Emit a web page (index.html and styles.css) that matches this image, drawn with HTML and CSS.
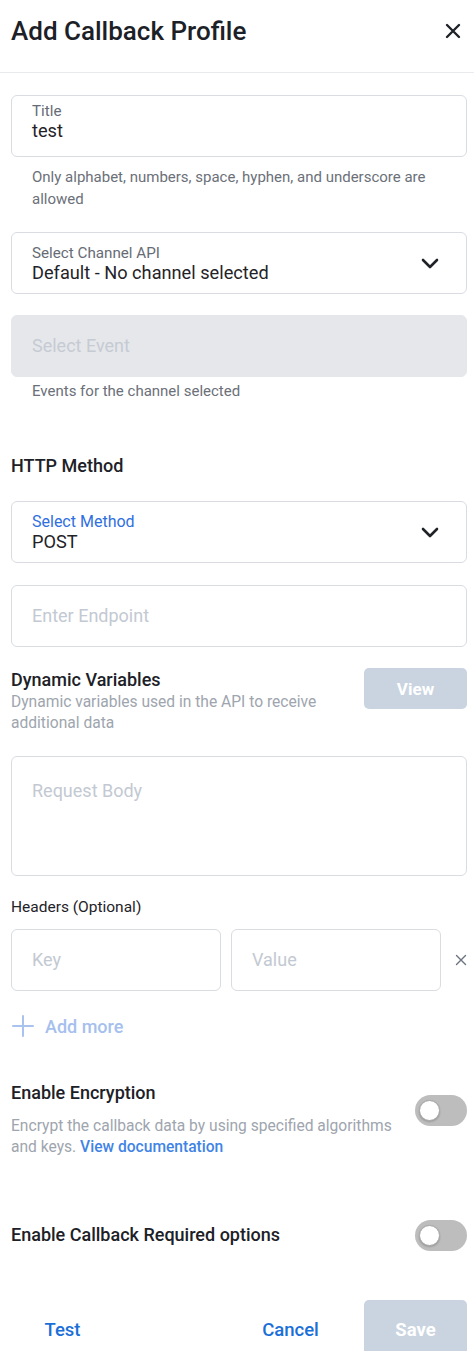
FILE: index.html
```html
<!DOCTYPE html>
<html lang="en">
<head>
<meta charset="utf-8">
<title>Add Callback Profile</title>
<link rel="stylesheet" href="styles.css">
</head>
<body>
<div class="panel">
  <header class="header">
    <h1 class="title">Add Callback Profile</h1>
    <button class="close" aria-label="Close">
      <svg width="16" height="16" viewBox="0 0 16 16"><path d="M2 2L14 14M14 2L2 14" stroke="#1f2328" stroke-width="2.4" stroke-linecap="round"/></svg>
    </button>
  </header>

  <div class="form">
    <div class="field field-title">
      <span class="field-label">Title</span>
      <span class="field-value">test</span>
    </div>
    <p class="help help-title">Only alphabet, numbers, space, hyphen, and underscore are allowed</p>

    <div class="field field-select field-channel">
      <div class="field-text">
        <span class="field-label">Select Channel API</span>
        <span class="field-value">Default - No channel selected</span>
      </div>
      <svg class="chevron" width="18" height="11" viewBox="0 0 18 11"><path d="M2 2L9 9L16 2" fill="none" stroke="#1f2328" stroke-width="2.6" stroke-linecap="round" stroke-linejoin="round"/></svg>
    </div>

    <div class="field field-disabled">
      <span class="placeholder">Select Event</span>
    </div>
    <p class="help help-event">Events for the channel selected</p>

    <h2 class="section-title http-title">HTTP Method</h2>

    <div class="field field-select field-method">
      <div class="field-text">
        <span class="field-label label-active">Select Method</span>
        <span class="field-value">POST</span>
      </div>
      <svg class="chevron" width="18" height="11" viewBox="0 0 18 11"><path d="M2 2L9 9L16 2" fill="none" stroke="#1f2328" stroke-width="2.6" stroke-linecap="round" stroke-linejoin="round"/></svg>
    </div>

    <div class="field field-endpoint">
      <span class="placeholder">Enter Endpoint</span>
    </div>

    <div class="dyn-row">
      <div class="dyn-text">
        <h2 class="section-title">Dynamic Variables</h2>
        <p class="desc">Dynamic variables used in the API to receive additional data</p>
      </div>
      <button class="btn-disabled btn-view">View</button>
    </div>

    <div class="field textarea">
      <span class="placeholder">Request Body</span>
    </div>

    <p class="headers-label">Headers (Optional)</p>
    <div class="header-row">
      <div class="field"><span class="placeholder">Key</span></div>
      <div class="field"><span class="placeholder">Value</span></div>
      <span class="remove">
        <svg width="12" height="12" viewBox="0 0 12 12"><path d="M1.5 1.5L10.5 10.5M10.5 1.5L1.5 10.5" stroke="#6b7280" stroke-width="1.4" stroke-linecap="round"/></svg>
      </span>
    </div>

    <div class="add-more">
      <svg width="22" height="22" viewBox="0 0 22 22"><path d="M11 1V21M1 11H21" stroke="#a9c3ef" stroke-width="2" stroke-linecap="round"/></svg>
      <span>Add more</span>
    </div>

    <div class="toggle-row enc-row">
      <div class="toggle-text">
        <h2 class="section-title">Enable Encryption</h2>
        <p class="desc enc-desc">Encrypt the callback data by using specified algorithms and keys. <a class="doc-link">View documentation</a></p>
      </div>
      <span class="switch"><span class="knob"></span></span>
    </div>

    <div class="toggle-row req-row">
      <h2 class="section-title">Enable Callback Required options</h2>
      <span class="switch"><span class="knob"></span></span>
    </div>

    <div class="footer">
      <button class="btn-link">Test</button>
      <div class="footer-right">
        <button class="btn-link">Cancel</button>
        <button class="btn-disabled btn-save">Save</button>
      </div>
    </div>
  </div>
</div>
</body>
</html>
```

FILE: styles.css
```css
* { box-sizing: border-box; }
html, body { margin: 0; padding: 0; background: #ffffff; }
body {
  font-family: Roboto, "Liberation Sans", sans-serif;
  color: #1f2328;
  overflow: hidden;
}
button { font-family: inherit; border: 0; background: none; cursor: pointer; padding: 0; }
h1, h2, p { margin: 0; }

.panel { width: 474px; }

.header {
  height: 73px;
  border-bottom: 1px solid #e8eaed;
  display: flex;
  align-items: center;
  justify-content: space-between;
  padding: 0 13px 10px 11px;
}
.title {
  font-size: 26px;
  font-weight: 500;
  color: #1c2127;
}
.close { display: flex; width: 16px; height: 16px; }

.form { padding: 0 7px 0 11px; }

.field {
  height: 62px;
  border: 1px solid #d9dce1;
  border-radius: 6px;
  background: #fff;
  padding: 0 20px;
  display: flex;
  flex-direction: column;
  justify-content: center;
}
.field-title { margin-top: 22px; padding-top: 6px; justify-content: flex-start; }
.field-label { font-size: 15.2px; line-height: 18px; color: #666c75; }
.label-active { color: #2f6fe0; font-size: 16px; }
.field-value { font-size: 18.2px; line-height: 22px; color: #1f2328; }

.field-select {
  flex-direction: row;
  align-items: center;
  justify-content: space-between;
  padding-right: 27px;
}
.field-text { display: flex; flex-direction: column; padding-top: 1px; }
.chevron { display: block; }

.help { font-size: 15px; color: #6b7079; padding-left: 21px; }
.help-title { line-height: 22px; margin-top: 9px; }
.field-channel { margin-top: 22px; }

.field-disabled {
  margin-top: 21px;
  background: #e5e7eb;
  border-color: #e5e7eb;
}
.placeholder { font-size: 18px; line-height: 22px; color: #c3c9d2; }
.field-disabled .placeholder { color: #c6cbd3; }

.help-event { line-height: 20px; margin-top: 4px; }

.section-title { font-size: 18px; font-weight: 500; line-height: 24px; color: #1c2127; }
.http-title { margin-top: 53px; }

.field-method { margin-top: 23px; }
.field-endpoint { margin-top: 22px; }

.dyn-row {
  margin-top: 20px;
  display: flex;
  justify-content: space-between;
  align-items: flex-start;
  gap: 12px;
}
.dyn-text { flex: 1; }
.dyn-text .section-title { line-height: 25px; }
.desc { font-size: 15.6px; line-height: 21px; color: #9ea5ae; }

.btn-disabled {
  width: 103px;
  background: #c9d4e0;
  color: #ffffff;
  font-weight: 700;
  font-size: 17px;
  border-radius: 5px;
  flex-shrink: 0;
}
.btn-view { height: 41px; margin-top: 1px; }

.textarea {
  margin-top: 22px;
  height: 120px;
  justify-content: flex-start;
  padding-top: 23px;
}

.headers-label { margin-top: 20px; font-size: 15.5px; line-height: 22px; color: #1f2328; }

.header-row {
  margin-top: 11px;
  display: grid;
  grid-template-columns: 1fr 1fr 16px;
  column-gap: 10px;
  align-items: center;
}
.remove { display: flex; justify-content: flex-end; }

.add-more {
  margin-top: 23px;
  height: 24px;
  display: flex;
  align-items: center;
  gap: 11px;
  padding-left: 1px;
  font-size: 18px;
  font-weight: 500;
  color: #a6c0ee;
}

.toggle-row {
  display: flex;
  justify-content: space-between;
}
.enc-row { margin-top: 43px; align-items: flex-start; }
.toggle-text { width: 400px; }
.enc-desc { margin-top: 11px; }
.doc-link { color: #3f84e5; font-weight: 500; }
.enc-row .switch { margin-top: 14px; }

.req-row { margin-top: 62px; align-items: center; height: 30px; }

.switch {
  width: 52px;
  height: 31px;
  border-radius: 16px;
  background: #bdbdbd;
  flex-shrink: 0;
  display: flex;
  align-items: center;
  padding-left: 4px;
}
.knob {
  width: 21px;
  height: 21px;
  border-radius: 50%;
  background: #ffffff;
  border: 1px solid #a6a6a6;
  box-shadow: 0 1px 2px rgba(0,0,0,0.2);
}

.footer {
  margin-top: 50px;
  display: flex;
  justify-content: space-between;
  align-items: stretch;
  height: 60px;
}
.footer-right { display: flex; gap: 22px; }
.btn-link {
  width: 103px;
  color: #1b6fd8;
  font-size: 18.5px;
  font-weight: 500;
}
.btn-save { height: 60px; font-size: 18.5px; }
```
